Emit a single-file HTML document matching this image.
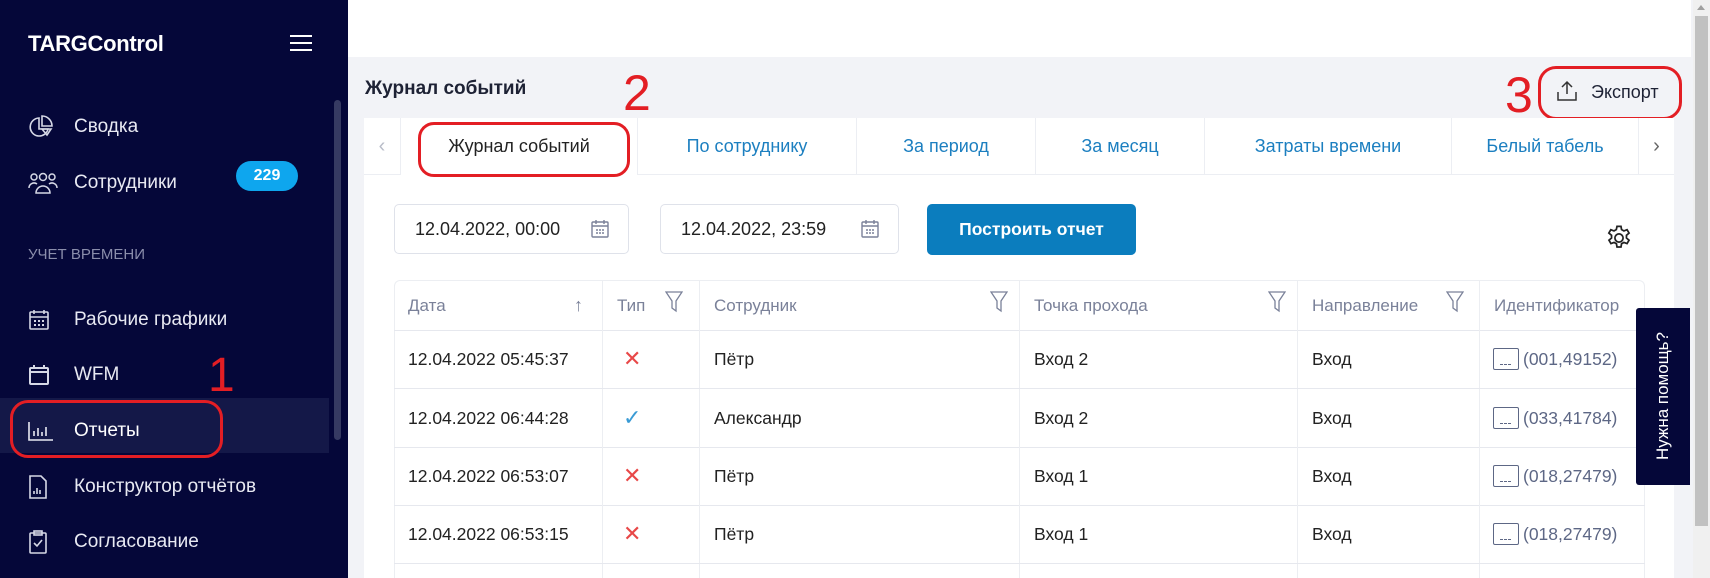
<!DOCTYPE html>
<html style="width:1710px;height:578px;overflow:hidden"><head><meta charset="utf-8"><style>
*{box-sizing:border-box;margin:0;padding:0}
body{width:1710px;height:578px;overflow:hidden;font-family:"Liberation Sans",sans-serif;background:#f2f3f7;position:relative}
.a{position:absolute}
#sb{left:0;top:0;width:348px;height:578px;background:#050739;color:#fff}
.nav{position:absolute;left:74px;font-size:19px;color:#e8e9f2;transform:translateY(-50%)}
.ic{position:absolute;left:28px;transform:translateY(-50%)}
.red{color:#e31e24;font-size:50px;line-height:1}
.redbox{border:3px solid #e31e24;border-radius:18px}
.tab{position:absolute;top:118px;height:57px;border-right:1px solid #eceef3;border-bottom:1px solid #eceef3;color:#1c7fc0;font-size:18px;display:flex;align-items:center;justify-content:center;background:#fff}
.inp{position:absolute;top:204px;height:50px;border:1px solid #dfe2ea;border-radius:5px;background:#fff;font-size:18px;color:#222;padding-left:20px;display:flex;align-items:center}
.cal{position:absolute;right:18px;top:14px}
.th{position:absolute;top:281px;height:49px;font-size:17px;color:#7a8199;display:flex;align-items:center;padding-left:14px;border-right:1px solid #eceef2}
.row{position:absolute;left:394px;width:1251px;border-bottom:1px solid #e6e8ee;height:59px}
.c{position:absolute;top:0;height:100%;display:flex;align-items:center;font-size:17.5px;color:#222;padding-left:14px;border-right:1px solid #eceef2}
.idb{display:inline-block;width:26px;height:22px;border:1.5px solid #5d6785;border-radius:2px;margin-right:4px;position:relative}
.idb:after{content:"";position:absolute;left:6px;bottom:4px;width:11px;border-bottom:1.5px dashed #5d6785}
</style></head><body>

<div id="sb" class="a">
 <div class="a" style="left:28px;top:31px;font-size:22px;font-weight:bold;letter-spacing:-0.3px">TARGControl</div>
 <div class="a" style="left:290px;top:35px;width:22px;height:2px;background:#fff;box-shadow:0 7px 0 #fff,0 14px 0 #fff"></div>

 <svg class="ic" style="top:127px" width="26" height="26" viewBox="0 0 26 26" fill="none" stroke="#d6d8e6" stroke-width="1.6"><path d="M11 4a9 9 0 1 0 9 11h-9z"/><path d="M14 2v10h10A10 10 0 0 0 14 2z"/><path d="M14 15h9l-4 6z"/></svg>
 <div class="nav" style="top:127px">Сводка</div>
 <svg class="ic" style="top:183px" width="30" height="24" viewBox="0 0 30 24" fill="none" stroke="#d6d8e6" stroke-width="1.5"><circle cx="6" cy="6" r="3"/><circle cx="15" cy="6" r="3.5"/><circle cx="24" cy="6" r="3"/><path d="M1 17a5 5 0 0 1 8-4M29 17a5 5 0 0 0-8-4M8 22a7 7 0 0 1 14 0z"/></svg>
 <div class="nav" style="top:183px">Сотрудники</div>
 <div class="a" style="left:236px;top:161px;width:62px;height:30px;border-radius:15px;background:#0ea6ee;font-size:16px;font-weight:bold;display:flex;align-items:center;justify-content:center">229</div>

 <div class="a" style="left:28px;top:246px;font-size:15px;color:#8a8dab">УЧЕТ ВРЕМЕНИ</div>

 <svg class="ic" style="top:320px" width="22" height="22" viewBox="0 0 22 22" fill="none" stroke="#d6d8e6" stroke-width="1.6"><rect x="2" y="3" width="18" height="17" rx="1"/><path d="M6 1v4M16 1v4M2 8h18"/><path d="M6 12h2M10 12h2M14 12h2M6 16h2M10 16h2M14 16h2" stroke-width="2"/></svg>
 <div class="nav" style="top:320px">Рабочие графики</div>
 <svg class="ic" style="top:375px" width="22" height="22" viewBox="0 0 22 22" fill="none" stroke="#d6d8e6" stroke-width="2"><rect x="2" y="4" width="18" height="16" rx="1"/><path d="M6 1v4M16 1v4M2 8h18"/></svg>
 <div class="nav" style="top:375px">WFM</div>

 <div class="a" style="left:0;top:398px;width:329px;height:55px;background:#141848"></div>
 <svg class="ic" style="top:431px" width="26" height="20" viewBox="0 0 26 20" fill="none" stroke="#e8e9f2" stroke-width="1.6"><path d="M1 1v18h24M6 15v-5M10 15v-8M14 15v-4M18 15v-9"/></svg>
 <div class="nav" style="top:431px;color:#fff">Отчеты</div>
 <div class="a redbox" style="left:10px;top:400px;width:213px;height:58px"></div>
 <div class="a red" style="left:208px;top:352px;font-size:48px">1</div>

 <svg class="ic" style="top:487px" width="20" height="24" viewBox="0 0 20 24" fill="none" stroke="#d6d8e6" stroke-width="1.6"><path d="M2 1h11l5 5v17H2z"/><path d="M6 19v-3M9 19v-6M12 19v-4"/></svg>
 <div class="nav" style="top:487px">Конструктор отчётов</div>
 <svg class="ic" style="top:542px" width="20" height="24" viewBox="0 0 20 24" fill="none" stroke="#d6d8e6" stroke-width="1.6"><rect x="2" y="3" width="16" height="20" rx="1"/><rect x="6" y="1" width="8" height="4"/><path d="M6 13l3 3 5-6"/></svg>
 <div class="nav" style="top:542px">Согласование</div>
 <div class="a" style="left:334px;top:100px;width:7px;height:340px;border-radius:4px;background:#363a62"></div>
</div>

<div class="a" style="left:348px;top:0;width:1343px;height:57px;background:#fff"></div>
<div class="a" style="left:1693px;top:0;width:17px;height:578px;background:#f0f0f0"></div>
<div class="a" style="left:1695px;top:16px;width:13px;height:510px;background:#c1c1c1"></div>
<div class="a" style="left:1697px;top:5px;width:0;height:0;border-left:4px solid transparent;border-right:4px solid transparent;border-bottom:5px solid #a0a0a0"></div>

<div class="a" style="left:365px;top:78px;font-size:19px;font-weight:bold;color:#1e2235">Журнал событий</div>
<div class="a red" style="left:623px;top:68px">2</div>
<div class="a red" style="left:1505px;top:70px">3</div>
<div class="a redbox" style="left:1538px;top:66px;width:144px;height:54px"></div>
<svg class="a" style="left:1556px;top:80px" width="22" height="22" viewBox="0 0 22 22" fill="none" stroke="#333" stroke-width="1.5"><path d="M11 14V2M6 7l5-5 5 5"/><path d="M2 12v8h18v-8"/></svg>
<div class="a" style="left:1591px;top:82px;font-size:18px;color:#1e2235">Экспорт</div>

<div class="a" style="left:364px;top:118px;width:1310px;height:460px;background:#fff"></div>
<div class="tab" style="left:364px;width:37px;color:#b8bcc8;font-size:20px">‹</div>
<div class="tab" style="left:401px;width:237px;color:#222;border-bottom:none">Журнал событий</div>
<div class="a redbox" style="left:418px;top:122px;width:212px;height:55px;border-radius:16px"></div>
<div class="tab" style="left:638px;width:219px">По сотруднику</div>
<div class="tab" style="left:857px;width:179px">За период</div>
<div class="tab" style="left:1036px;width:169px">За месяц</div>
<div class="tab" style="left:1205px;width:247px">Затраты времени</div>
<div class="tab" style="left:1452px;width:187px">Белый табель</div>
<div class="tab" style="left:1639px;width:35px;color:#666;font-size:20px;border-right:none">›</div>

<div class="inp" style="left:394px;width:235px">12.04.2022, 00:00<svg class="cal" width="20" height="20" viewBox="0 0 20 20" fill="none" stroke="#7a8199" stroke-width="1.4"><rect x="2" y="3" width="16" height="15" rx="1"/><path d="M6 1v4M14 1v4M2 7h16M6 11h2M9 11h2M12 11h2M6 14h2M9 14h2M12 14h2"/></svg></div>
<div class="inp" style="left:660px;width:239px">12.04.2022, 23:59<svg class="cal" width="20" height="20" viewBox="0 0 20 20" fill="none" stroke="#7a8199" stroke-width="1.4"><rect x="2" y="3" width="16" height="15" rx="1"/><path d="M6 1v4M14 1v4M2 7h16M6 11h2M9 11h2M12 11h2M6 14h2M9 14h2M12 14h2"/></svg></div>
<div class="a" style="left:927px;top:204px;width:209px;height:51px;border-radius:5px;background:#0b7dbe;color:#fff;font-weight:bold;font-size:17.5px;display:flex;align-items:center;justify-content:center">Построить отчет</div>
<svg class="a" style="left:1605px;top:224px" width="28" height="28" viewBox="0 0 24 24" fill="none" stroke="#222" stroke-width="1.5"><circle cx="12" cy="12" r="3.5"/><path d="M10.3 2h3.4l.5 2.8 2 1.1 2.7-1 1.7 2.9-2.2 1.9v2.3l2.2 1.9-1.7 2.9-2.7-1-2 1.1-.5 2.8h-3.4l-.5-2.8-2-1.1-2.7 1-1.7-2.9 2.2-1.9v-2.3L3.3 7.8 5 4.9l2.7 1 2-1.1z"/></svg>

<div class="a" style="left:394px;top:280px;width:1251px;height:298px;border:1px solid #eceef2;border-bottom:none;border-radius:6px 6px 0 0"></div>
<div class="a" style="left:394px;top:330px;width:1251px;border-top:1px solid #e6e8ee"></div>
<div class="th" style="left:394px;width:209px">Дата<span class="a" style="left:180px;font-size:18px">↑</span></div>
<div class="th" style="left:603px;width:97px">Тип<svg class="a" style="left:62px;top:10px" width="18" height="22" viewBox="0 0 18 22" fill="none" stroke="#7a8199" stroke-width="1.3"><path d="M1 1h16l-6 9v10l-4-3v-7z"/></svg></div>
<div class="th" style="left:700px;width:320px">Сотрудник<svg class="a" style="left:290px;top:10px" width="18" height="22" viewBox="0 0 18 22" fill="none" stroke="#7a8199" stroke-width="1.3"><path d="M1 1h16l-6 9v10l-4-3v-7z"/></svg></div>
<div class="th" style="left:1020px;width:278px">Точка прохода<svg class="a" style="left:248px;top:10px" width="18" height="22" viewBox="0 0 18 22" fill="none" stroke="#7a8199" stroke-width="1.3"><path d="M1 1h16l-6 9v10l-4-3v-7z"/></svg></div>
<div class="th" style="left:1298px;width:182px">Направление<svg class="a" style="left:148px;top:10px" width="18" height="22" viewBox="0 0 18 22" fill="none" stroke="#7a8199" stroke-width="1.3"><path d="M1 1h16l-6 9v10l-4-3v-7z"/></svg></div>
<div class="th" style="left:1480px;width:165px;border-right:none;white-space:nowrap">Идентификатор</div>

<div class="row" style="top:330px">
 <div class="c" style="left:0;width:209px">12.04.2022 05:45:37</div>
 <div class="c" style="left:209px;width:97px;color:#e84848;font-size:22px;padding-left:20px">✕</div>
 <div class="c" style="left:306px;width:320px">Пётр</div>
 <div class="c" style="left:626px;width:278px">Вход 2</div>
 <div class="c" style="left:904px;width:182px">Вход</div>
 <div class="c" style="left:1086px;width:165px;border-right:none;color:#5d6785;padding-left:13px"><span class="idb"></span>(001,49152)</div>
</div>
<div class="row" style="top:389px">
 <div class="c" style="left:0;width:209px">12.04.2022 06:44:28</div>
 <div class="c" style="left:209px;width:97px;color:#3a9bd5;font-size:22px;padding-left:20px">✓</div>
 <div class="c" style="left:306px;width:320px">Александр</div>
 <div class="c" style="left:626px;width:278px">Вход 2</div>
 <div class="c" style="left:904px;width:182px">Вход</div>
 <div class="c" style="left:1086px;width:165px;border-right:none;color:#5d6785;padding-left:13px"><span class="idb"></span>(033,41784)</div>
</div>
<div class="row" style="top:447px">
 <div class="c" style="left:0;width:209px">12.04.2022 06:53:07</div>
 <div class="c" style="left:209px;width:97px;color:#e84848;font-size:22px;padding-left:20px">✕</div>
 <div class="c" style="left:306px;width:320px">Пётр</div>
 <div class="c" style="left:626px;width:278px">Вход 1</div>
 <div class="c" style="left:904px;width:182px">Вход</div>
 <div class="c" style="left:1086px;width:165px;border-right:none;color:#5d6785;padding-left:13px"><span class="idb"></span>(018,27479)</div>
</div>
<div class="row" style="top:505px">
 <div class="c" style="left:0;width:209px">12.04.2022 06:53:15</div>
 <div class="c" style="left:209px;width:97px;color:#e84848;font-size:22px;padding-left:20px">✕</div>
 <div class="c" style="left:306px;width:320px">Пётр</div>
 <div class="c" style="left:626px;width:278px">Вход 1</div>
 <div class="c" style="left:904px;width:182px">Вход</div>
 <div class="c" style="left:1086px;width:165px;border-right:none;color:#5d6785;padding-left:13px"><span class="idb"></span>(018,27479)</div>
</div>
<div class="row" style="top:564px;height:14px;border-bottom:none">
 <div class="c" style="left:0;width:209px"></div><div class="c" style="left:209px;width:97px"></div><div class="c" style="left:306px;width:320px"></div><div class="c" style="left:626px;width:278px"></div><div class="c" style="left:904px;width:182px"></div>
</div>

<div class="a" style="left:1636px;top:308px;width:54px;height:177px;background:#050739;border-radius:3px 0 0 3px"></div>
<div class="a" style="left:1663px;top:396px;transform:translate(-50%,-50%) rotate(-90deg);color:#fff;font-size:17px;white-space:nowrap">Нужна помощь?</div>
</body></html>
